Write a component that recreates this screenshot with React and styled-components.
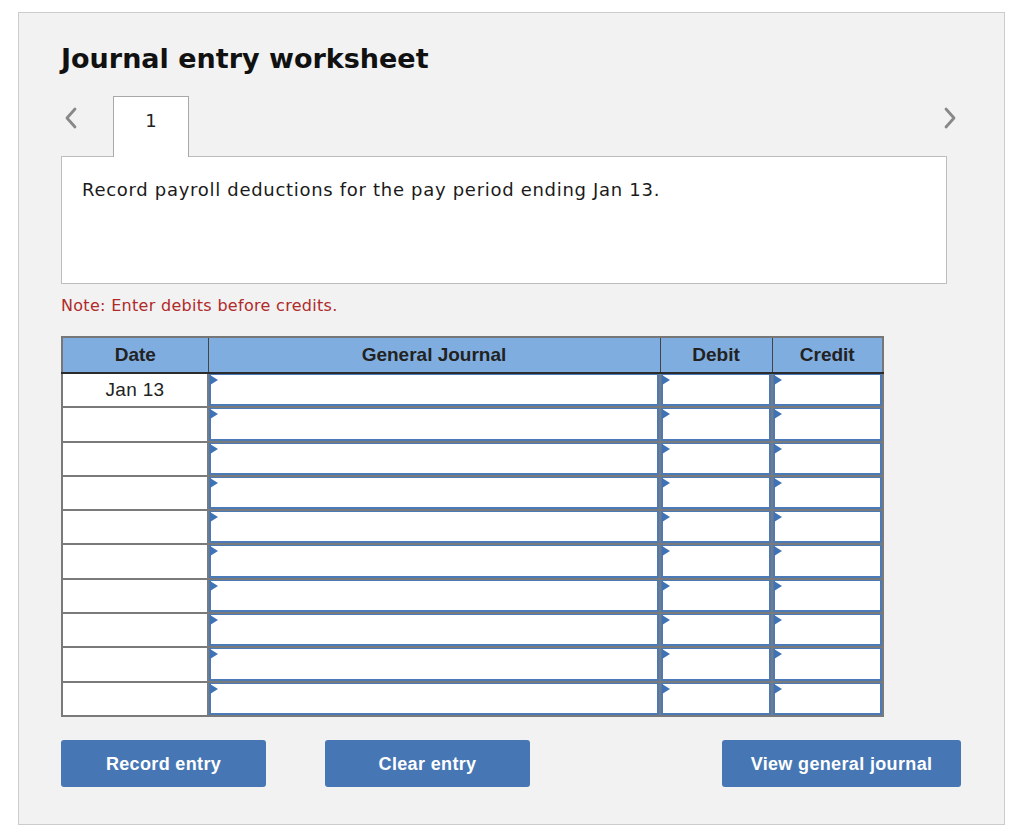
import React from "react";
import styled, { createGlobalStyle } from "styled-components";

const Global = createGlobalStyle`
  html, body { margin: 0; padding: 0; background: #ffffff; }
  body { font-family: "DejaVu Sans", Verdana, sans-serif; }
  * { box-sizing: border-box; }
`;

const Panel = styled.div`
  margin: 12px 0 0 18px;
  width: 987px;
  height: 813px;
  background: #f2f2f2;
  border: 1px solid #cccccc;
  padding: 31px 42px 0 42px;
`;

const Title = styled.h1`
  margin: 0;
  font-family: "DejaVu Sans", Verdana, sans-serif;
  font-weight: bold;
  font-size: 27px;
  line-height: 30px;
  color: #111;
`;

const NavRow = styled.div`
  margin-top: 22px;
  display: flex;
  align-items: flex-start;
  height: 61px;
  width: 900px;
`;

const Arrow = styled.button`
  border: 0;
  background: transparent;
  padding: 0 0 0 ${(p) => p.$pl || 0}px;
  margin-top: 11px;
  width: ${(p) => p.$w}px;
  display: flex;
  cursor: pointer;
`;

const Tab = styled.div`
  width: 76px;
  height: 61px;
  background: #fff;
  border: 1px solid #a8a8a8;
  border-bottom: 0;
  display: flex;
  justify-content: center;
  padding-top: 13px;
  font-size: 18px;
  color: #222;
  position: relative;
  z-index: 1;
`;

const Spacer = styled.div`
  flex: 1;
`;

const Prompt = styled.div`
  width: 886px;
  height: 128px;
  margin-top: -1px;
  background: #fff;
  border: 1px solid #bdbdbd;
  padding: 21px 20px;
  font-size: 18px;
  letter-spacing: 0.7px;
  line-height: 24px;
  color: #1a1a1a;
`;

const Note = styled.p`
  margin: 12px 0 0;
  font-size: 16px;
  letter-spacing: 0.3px;
  line-height: 20px;
  color: #b02a2a;
`;

const Table = styled.table`
  margin-top: 20px;
  border-collapse: collapse;
  width: 821px;
  table-layout: fixed;
  border: 2px solid #777;
  font-family: "Liberation Sans", Arial, sans-serif;
`;

const Th = styled.th`
  background: #80ade0;
  height: 36px;
  font-size: 19px;
  font-weight: bold;
  color: #222;
  border: 1px solid #444;
  border-bottom: 2px solid #2b2b2b;
  width: ${(p) => p.$w}px;
  padding: 0;
`;

const Td = styled.td`
  height: 34.3px;
  border: 2px solid #7a7a7a;
  border-top-width: 1px;
  padding: 0;
  background: #fff;
  text-align: center;
  font-size: 19px;
  letter-spacing: 0.3px;
  color: #222;
`;

const InputCell = styled.td`
  height: 34.3px;
  border: 2px solid #7a7a7a;
  border-top-width: 1px;
  padding: 0;
  background: #fff;
`;

const Field = styled.div`
  position: relative;
  height: 100%;
  min-height: 32px;
  border: 2px solid #4a7ab7;
  border-top-width: 1px;
  background: #fff;
  &::before {
    content: "";
    position: absolute;
    left: -1px;
    top: 0px;
    border-top: 5px solid transparent;
    border-bottom: 5px solid transparent;
    border-left: 8px solid #3f73b6;
  }
`;

const ButtonRow = styled.div`
  margin-top: 23px;
  display: flex;
  width: 900px;
`;

const Button = styled.button`
  width: ${(p) => p.$w}px;
  height: 47px;
  margin-left: ${(p) => p.$ml || 0}px;
  padding: 3px 0 0;
  background: #4677b4;
  color: #fff;
  border: 0;
  border-radius: 3px;
  font-family: "Liberation Sans", Arial, sans-serif;
  font-weight: bold;
  font-size: 18px;
  letter-spacing: 0.35px;
  cursor: pointer;
`;

const Chevron = ({ dir }) => (
  <svg width="14" height="22" viewBox="0 0 14 22">
    <path
      d={dir === "left" ? "M11 2 L3 11 L11 20" : "M3 2 L11 11 L3 20"}
      fill="none"
      stroke="#888888"
      strokeWidth="2.8"
      strokeLinecap="round"
      strokeLinejoin="round"
    />
  </svg>
);

const rows = ["Jan 13", "", "", "", "", "", "", "", "", ""];

export default function App() {
  return (
    <>
      <Global />
      <Panel>
        <Title>Journal entry worksheet</Title>
        <NavRow>
          <Arrow $w={52} $pl={3} aria-label="previous">
            <Chevron dir="left" />
          </Arrow>
          <Tab>1</Tab>
          <Spacer />
          <Arrow $w={18} aria-label="next">
            <Chevron dir="right" />
          </Arrow>
        </NavRow>
        <Prompt>Record payroll deductions for the pay period ending Jan 13.</Prompt>
        <Note>Note: Enter debits before credits.</Note>
        <Table>
          <thead>
            <tr>
              <Th $w={146}>Date</Th>
              <Th $w={452}>General Journal</Th>
              <Th $w={112}>Debit</Th>
              <Th $w={111}>Credit</Th>
            </tr>
          </thead>
          <tbody>
            {rows.map((d, i) => (
              <tr key={i}>
                <Td>{d}</Td>
                <InputCell><Field /></InputCell>
                <InputCell><Field /></InputCell>
                <InputCell><Field /></InputCell>
              </tr>
            ))}
          </tbody>
        </Table>
        <ButtonRow>
          <Button $w={205}>Record entry</Button>
          <Button $w={205} $ml={59}>Clear entry</Button>
          <Spacer />
          <Button $w={239}>View general journal</Button>
        </ButtonRow>
      </Panel>
    </>
  );
}
